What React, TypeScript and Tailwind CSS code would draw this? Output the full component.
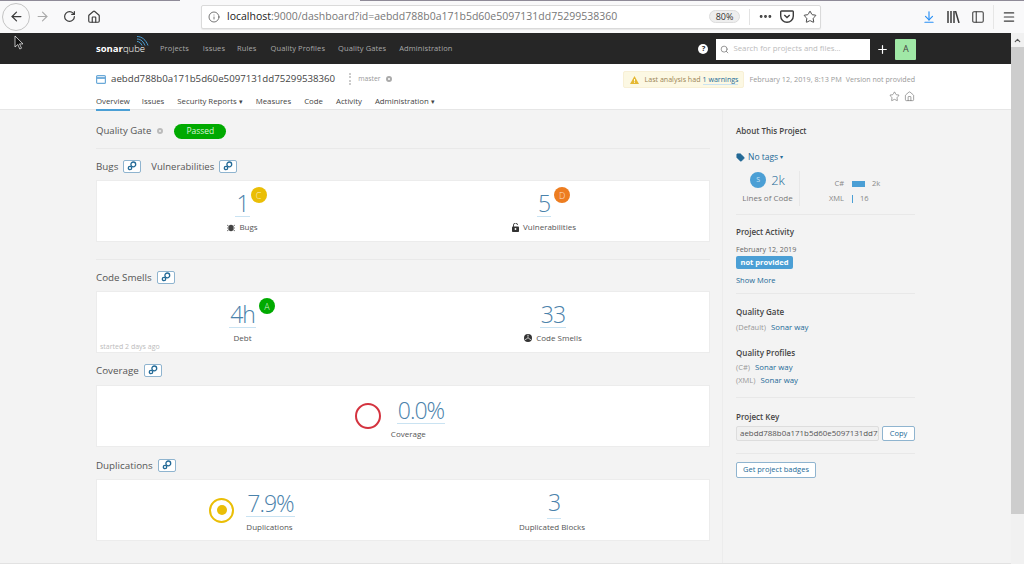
import React from "react";
import { Star, Home, Search, Plus, Tag, ChevronUp, MoreHorizontal, RotateCw, ArrowLeft, ArrowRight, Info, Menu, ArrowDownToLine, PanelLeft } from "lucide-react";

const sans = "font-['Open_Sans',sans-serif]";

function LinkBtn() {
  return (
    <span className="ml-[5px] inline-flex h-[13px] w-[18px] items-center justify-center rounded-[2px] border border-[#8fb4cf] bg-white">
      <svg width="10" height="10" viewBox="0 0 10 10" fill="none" stroke="#236a97" strokeWidth="1.3">
        <circle cx="6.3" cy="3.4" r="2.4" />
        <circle cx="3" cy="7" r="1.7" />
      </svg>
    </span>
  );
}

function Rating({ letter, color, className }: { letter: string; color: string; className: string }) {
  return (
    <span
      className={`absolute top-[-3px] flex h-[16px] w-[16px] items-center justify-center rounded-full text-[9px] leading-none tracking-normal text-[#ffffffcc] ${className}`}
      style={{ backgroundColor: color }}
    >
      {letter}
    </span>
  );
}

function Num({ children, badge }: { children: React.ReactNode; badge?: React.ReactNode }) {
  return (
    <span className="relative border-b border-[#cae3f2] px-[1px] text-[23px] leading-[26px] font-light tracking-[-1px] text-[#4a82ab]">
      {children}
      {badge}
    </span>
  );
}

function Label({ children }: { children: React.ReactNode }) {
  return <div className="mt-[4px] flex items-center gap-[4px] text-[8px] leading-[12px] text-[#555]">{children}</div>;
}

function Section({ title, extra, className }: { title: string; extra?: React.ReactNode; className: string }) {
  return (
    <div className={`flex items-center text-[9.8px] text-[#555] ${className}`}>
      <span className="pt-[2px] leading-[12px]">{title}</span>
      <LinkBtn />
      {extra}
    </div>
  );
}

function Card({ children, className }: { children: React.ReactNode; className: string }) {
  return <div className={`border border-[#ececec] bg-white ${className}`}>{children}</div>;
}

function Head({ children, className = "" }: { children: React.ReactNode; className?: string }) {
  return <div className={`text-[8px] leading-[12px] font-semibold text-[#444] ${className}`}>{children}</div>;
}

function SideLink({ children }: { children: React.ReactNode }) {
  return <span className="text-[7.8px] text-[#236a97]">{children}</span>;
}

function Browser() {
  return (
    <div className="relative flex h-[33px] items-center bg-[#f9f9fa] text-[#3c3c3c]">
      <div className="absolute top-0 left-0 h-[1px] w-[180px] bg-[#8f8b98]" />
      <div className="absolute top-0 left-[360px] h-[1px] w-[664px] bg-[#8f8b98]" />
      <span className="ml-[2px] flex h-[28px] w-[28px] items-center justify-center rounded-full border border-[#c4c4c4] bg-[#f9f9fa]">
        <ArrowLeft size={15} strokeWidth={2} />
      </span>
      <ArrowRight size={15} strokeWidth={1.8} className="ml-[5px] text-[#aaa]" />
      <RotateCw size={13} strokeWidth={2.2} className="ml-[13px]" />
      <Home size={14} strokeWidth={2} className="ml-[11px]" />
      <div className="ml-[100px] flex h-[24px] w-[620px] items-center rounded-[2px] border border-[#dadada] bg-white pr-[3px] pl-[6px] shadow-[0_1px_1px_#e8e8e8]">
        <Info size={12} strokeWidth={1.4} />
        <span className="ml-[7px] flex-1 overflow-hidden text-[10.5px] whitespace-nowrap text-[#777]">
          <span className="text-[#222]">localhost</span>:9000/dashboard?id=aebdd788b0a171b5d60e5097131dd75299538360
        </span>
        <span className="flex h-[13px] w-[31px] items-center justify-center rounded-full border border-[#ddd] bg-[#eee] text-[9px] text-[#333]">80%</span>
        <span className="ml-[9px] h-[16px] w-[1px] bg-[#e3e3e3]" />
        <MoreHorizontal size={15} strokeWidth={2.6} className="ml-[8px]" />
        <svg width="14" height="13" viewBox="0 0 14 13" fill="none" stroke="#3c3c3c" strokeWidth="1.4" className="ml-[7px]">
          <path d="M1.5 1h11a.8.8 0 0 1 .8.8V6a6.3 6.3 0 0 1-12.6 0V1.8A.8.8 0 0 1 1.5 1z" />
          <path d="M4.3 5l2.7 2.6L9.700 5" />
        </svg>
        <Star size={14} strokeWidth={1.6} className="ml-[9px]" />
      </div>
      <ArrowDownToLine size={14} strokeWidth={2} className="ml-[101px] text-[#2a90f5]" />
      <svg width="13" height="12" viewBox="0 0 13 12" fill="none" stroke="#3c3c3c" strokeWidth="1.5" className="ml-[11px]">
        <path d="M1 0v12M4 0v12M7 0v12M8.500 0l3.500 12" />
      </svg>
      <PanelLeft size={14} strokeWidth={1.8} className="ml-[11px]" />
      <span className="ml-[8px] h-[24px] w-[1px] bg-[#e6e6e6]" />
      <Menu size={14} strokeWidth={2} className="ml-[8px]" />
    </div>
  );
}

function TopNav() {
  const items = [
    ["Projects", "ml-[12px]"],
    ["Issues", "ml-[14px]"],
    ["Rules", "ml-[12px]"],
    ["Quality Profiles", "ml-[14px]"],
    ["Quality Gates", "ml-[13px]"],
    ["Administration", "ml-[13px]"],
  ];
  return (
    <div className="flex h-[31px] items-center bg-[#262626] pt-[1px] pl-[96px] text-[7.5px] tracking-[0.1px] text-[#a9a9a9]">
      <span className="relative flex w-[52px] items-center text-[9.5px] tracking-normal text-[#fff]">
        <b className="font-bold">sonar</b>
        <span className="font-light">qube</span>
        <svg width="13" height="11" viewBox="0 0 13 11" fill="none" stroke="#4b9fd5" strokeWidth="1" className="absolute top-[-7px] right-[-1px]">
          <path d="M1 1.500c5 0 9 3.500 11 9M1 4c4 0 6.500 3 8 6.500M1 6.500c2.500 0 4 1.800 5 4" />
        </svg>
      </span>
      {items.map(([t, c]) => (
        <span key={t} className={c}>{t}</span>
      ))}
      <span className="ml-[246px] flex h-[10px] w-[10px] items-center justify-center rounded-full bg-white text-[7.5px] font-bold tracking-normal text-[#262626]">?</span>
      <div className="ml-[8px] flex h-[21px] w-[154px] items-center bg-white pl-[4px] text-[7.8px] tracking-normal text-[#bbb]">
        <Search size={9} strokeWidth={2} className="text-[#777]" />
        <span className="ml-[4px]">Search for projects and files...</span>
      </div>
      <Plus size={13} strokeWidth={2.2} className="ml-[6px] text-white" />
      <span className="ml-[6px] flex h-[21px] w-[21px] items-center justify-center rounded-[1px] bg-[#a0e8a6] text-[9px] tracking-normal text-[#444]">A</span>
    </div>
  );
}

function ProjectBar() {
  const tabs = [
    ["Overview", "border-b-2 border-[#4b9fd5] pb-[2px]", ""],
    ["Issues", "ml-[12px]", ""],
    ["Security Reports", "ml-[13px]", "▾"],
    ["Measures", "ml-[13px]", ""],
    ["Code", "ml-[13px]", ""],
    ["Activity", "ml-[13px]", ""],
    ["Administration", "ml-[13px]", "▾"],
  ];
  return (
    <div className="flex h-[46px] border-b border-[#e6e6e6] bg-white pr-[96px] pl-[96px]">
      <div className="flex-1">
        <div className="flex h-[30px] items-center">
          <svg width="10" height="9" viewBox="0 0 10 9" fill="none" stroke="#6aa9d8" strokeWidth="1.2">
            <rect x="0.6" y="0.6" width="8.800" height="7.800" rx="1" />
            <path d="M0.600 3h8.800" strokeWidth="1.800" />
          </svg>
          <span className="ml-[5px] text-[9.7px] text-[#444]">aebdd788b0a171b5d60e5097131dd75299538360</span>
          <span className="ml-[14px] h-[12px] border-l-2 border-dotted border-[#ccc]" />
          <span className="ml-[7px] text-[6.8px] text-[#999]">master</span>
          <span className="ml-[6px] flex h-[6px] w-[6px] rounded-full border-2 border-[#aaa]" />
        </div>
        <div className="flex h-[16px] items-start pt-[1px] text-[7.8px] leading-[12px] whitespace-nowrap text-[#444]">
          {tabs.map(([t, c, a]) => (
            <span key={t} className={c}>
              {t}
              {a && <span className="ml-[2px] text-[7px]">{a}</span>}
            </span>
          ))}
        </div>
      </div>
      <div className="flex flex-col items-end">
        <div className="mt-[7px] flex items-center text-[7.3px] whitespace-nowrap text-[#999]">
          <span className="mr-[5px] flex h-[17px] w-[121px] items-center rounded-[2px] border border-[#f8f0d6] bg-[#fcf8e3] pl-[6px] text-[#9b8455]">
            <svg width="9" height="8" viewBox="0 0 9 8" className="mr-[5px]">
              <path d="M4.500 0L9 8H0z" fill="#e5b832" />
              <path d="M4.500 3v2.500M4.500 6.200v.8" stroke="#fff" strokeWidth="0.9" />
            </svg>
            <span className="text-[7.1px]">Last analysis had</span>
            <span className="ml-[2px] border-b border-[#cae3f2] text-[7.1px] text-[#236a97]">1 warnings</span>
          </span>
          <span>February 12, 2019, 8:13 PM</span>
          <span className="ml-[4px] text-[7.1px]">Version not provided</span>
        </div>
        <div className="mt-[3px] flex items-center gap-[4px] text-[#666]">
          <Star size={11} strokeWidth={1.3} />
          <Home size={11} strokeWidth={1.3} />
        </div>
      </div>
    </div>
  );
}

function Sidebar() {
  const hr = "border-t border-[#e8e8e8]";
  return (
    <aside className="ml-[12px] w-[193px] border-l border-[#ececec] pt-[15px] pl-[13px]">
      <Head>About This Project</Head>
      <div className="mt-[14px] flex items-center text-[8.5px] leading-[12px] text-[#236a97]">
        <Tag size={9} fill="#236a97" strokeWidth={1.5} />
        <span className="ml-[3px]">No tags</span>
        <span className="ml-[2px] text-[6px]">▾</span>
      </div>
      <div className="mt-[8px] flex h-[33px] items-start">
        <div className="flex w-[64px] flex-col items-center border-r border-[#e8e8e8] pb-[2px]">
          <div className="flex items-center">
            <span className="flex h-[16px] w-[16px] items-center justify-center rounded-full bg-[#4b9fd5] text-[7px] text-[#cfe6f5]">S</span>
            <span className="ml-[5px] text-[13px] leading-[18px] font-light text-[#236a97]">2k</span>
          </div>
          <span className="mt-[3px] text-[8px] leading-[12px] text-[#777]">Lines of Code</span>
        </div>
        <div className="ml-[28px] grid grid-cols-[16px_20px_12px] items-center gap-y-[4px] pt-[7px] text-[7.5px] leading-[11px] text-[#888]">
          <span className="text-right">C#</span>
          <span className="ml-[8px] h-[6px] w-[13px] bg-[#4b9fd5]" />
          <span className="ml-[8px]">2k</span>
          <span className="text-right">XML</span>
          <span className="ml-[8px] h-[8px] w-[1px] bg-[#4b9fd5]" />
          <span className="-ml-[4px]">16</span>
        </div>
      </div>
      <div className={`mt-[10px] ${hr}`} />
      <Head className="mt-[11px]">Project Activity</Head>
      <div className="mt-[5px] text-[7.2px] leading-[12px] text-[#666]">February 12, 2019</div>
      <div className="mt-[1px] flex h-[13px] w-[57px] items-center justify-center rounded-[2px] bg-[#4b9fd5] text-[7.5px] font-bold text-white">not provided</div>
      <div className="mt-[6px] text-[7.5px] leading-[11px] text-[#236a97]">Show More</div>
      <div className={`mt-[7px] ${hr}`} />
      <Head className="mt-[12px]">Quality Gate</Head>
      <div className="mt-[3px] flex items-center gap-[5px] text-[7.5px] leading-[12px] text-[#999]">(Default) <SideLink>Sonar way</SideLink></div>
      <Head className="mt-[14px]">Quality Profiles</Head>
      <div className="mt-[2px] flex items-center gap-[5px] text-[7.5px] leading-[13px] text-[#999]">(C#) <SideLink>Sonar way</SideLink></div>
      <div className="flex items-center gap-[5px] text-[7.5px] leading-[13px] text-[#999]">(XML) <SideLink>Sonar way</SideLink></div>
      <div className={`mt-[10px] ${hr}`} />
      <Head className="mt-[13px]">Project Key</Head>
      <div className="mt-[3px] flex items-center">
        <div className="h-[15px] w-[143px] overflow-hidden rounded-[2px] border border-[#ddd] bg-[#f0f0f0] px-[3px] text-[7.9px] leading-[13px] whitespace-nowrap text-[#555]">aebdd788b0a171b5d60e5097131dd75299538360</div>
        <span className="ml-[3px] flex h-[15px] w-[33px] items-center justify-center rounded-[2px] border border-[#8fb4cf] bg-white text-[7.5px] text-[#236a97]">Copy</span>
      </div>
      <div className={`mt-[12px] ${hr}`} />
      <span className="mt-[8px] flex h-[16px] w-[80px] items-center justify-center rounded-[2px] border border-[#8fb4cf] bg-white text-[7.500px] text-[#236a97]">Get project badges</span>
    </aside>
  );
}

function Main() {
  return (
    <main className="w-[614px]">
      <div className="flex h-[39px] items-center border-b border-[#e9e9e9] pt-[4px] text-[9.6px] text-[#555]">
        Quality Gate
        <span className="ml-[6px] flex h-[6px] w-[6px] rounded-full border-2 border-[#bbb]" />
        <span className="ml-[11px] flex h-[15px] w-[52px] items-center justify-center rounded-full bg-[#00aa00] text-[8.5px] text-[#d8f3d8]">Passed</span>
      </div>
      <Section title="Bugs" className="mt-[10px]" extra={<><span className="ml-[10px] pt-[2px] text-[9.5px] leading-[12px]">Vulnerabilities</span><LinkBtn /></>} />
      <Card className="mt-[7px] grid h-[62px] grid-cols-2 pt-[9px]">
        <div className="flex justify-center">
          <div className="mr-[15px] flex flex-col items-center">
            <Num badge={<Rating letter="C" color="#eabe06" className="left-[calc(100%+1px)]" />}>1</Num>
            <Label>
              <svg width="8" height="9" viewBox="0 0 8 9" fill="#444"><ellipse cx="4" cy="5" rx="2.500" ry="3.300" /><path d="M0 2l2 1.500M8 2L6 3.500M0 5h2M8 5H6M0 8l2-1.500M8 8L6 6.500" stroke="#444" strokeWidth="0.7" /></svg>
              Bugs
            </Label>
          </div>
        </div>
        <div className="flex justify-center">
          <div className="mr-[24px] flex flex-col items-center">
            <Num badge={<Rating letter="D" color="#ed7d20" className="left-[calc(100%+3px)]" />}>5</Num>
            <Label>
              <svg width="7" height="9" viewBox="0 0 7 9" fill="#333"><rect x="0" y="3.500" width="7" height="5.500" rx="0.800" /><path d="M1.500 4V2a2 2 0 0 1 4 0" fill="none" stroke="#333" strokeWidth="0.900" /><circle cx="3.500" cy="6" r="0.900" fill="#fff" /></svg>
              Vulnerabilities
            </Label>
          </div>
        </div>
      </Card>
      <div className="mt-[17px] border-t border-[#e9e9e9]" />
      <Section title="Code Smells" className="mt-[10px]" />
      <Card className="relative mt-[7px] grid h-[62px] grid-cols-2 pt-[9px]">
        <div className="flex justify-center">
          <div className="mr-[15px] flex flex-col items-center">
            <Num badge={<Rating letter="A" color="#00aa00" className="left-[calc(100%+3px)]" />}>4h</Num>
            <Label>Debt</Label>
          </div>
        </div>
        <div className="flex justify-center">
          <div className="mr-[6px] flex flex-col items-center">
            <Num>33</Num>
            <Label>
              <svg width="8" height="8" viewBox="0 0 8 8"><circle cx="4" cy="4" r="4" fill="#333" /><circle cx="4" cy="4" r="0.800" fill="#fff" /><path d="M4 2.600V0.800M2.800 4.700L1.200 5.600M5.200 4.700l1.600.9" stroke="#fff" strokeWidth="0.900" /></svg>
              Code Smells
            </Label>
          </div>
        </div>
        <span className="absolute bottom-0 left-[3px] text-[7px] leading-[10px] text-[#bbb]">started 2 days ago</span>
      </Card>
      <Section title="Coverage" className="mt-[10px]" />
      <Card className="mt-[8px] flex h-[62px] items-center justify-center pr-[6px]">
        <span className="h-[26px] w-[26px] rounded-full border-2 border-[#d4333f]" />
        <div className="ml-[16px] flex flex-col items-start pt-[4px]">
          <Num>0.0%</Num>
          <div className="-ml-[6px]"><Label>Coverage</Label></div>
        </div>
      </Card>
      <Section title="Duplications" className="mt-[11px]" />
      <Card className="mt-[7px] grid h-[62px] grid-cols-2">
        <div className="flex items-center justify-center pl-[4px]">
          <span className="flex h-[25px] w-[25px] items-center justify-center rounded-full border-2 border-[#eabe06]">
            <span className="h-[10px] w-[10px] rounded-full bg-[#eabe06]" />
          </span>
          <div className="ml-[12px] flex flex-col items-start pt-[2px]">
            <Num>7.9%</Num>
            <Label>Duplications</Label>
          </div>
        </div>
        <div className="flex justify-center pt-[9px]">
          <div className="mr-[8px] flex flex-col items-center">
            <span className="ml-[4px]"><Num>3</Num></span>
            <Label>Duplicated Blocks</Label>
          </div>
        </div>
      </Card>
    </main>
  );
}

export default function App() {
  return (
    <div className={`h-[564px] w-[1024px] overflow-hidden bg-[#f3f3f3] ${sans}`}>
      <Browser />
      <div className="relative flex h-[531px]">
        <div className="w-[1011px]">
          <TopNav />
          <ProjectBar />
          <div className="flex h-[454px] border-b border-[#e2e2e2] pl-[96px]">
            <Main />
            <Sidebar />
          </div>
        </div>
        <div className="flex w-[13px] flex-col bg-[#f1f1f1]">
          <div className="flex h-[14px] items-center justify-center"><ChevronUp size={9} strokeWidth={3} className="text-[#555]" /></div>
          <div className="h-[467px] bg-[#cdcdcd]" />
        </div>
        <svg width="10" height="15" viewBox="0 0 10 15" className="absolute top-[2px] left-[14px]">
          <path d="M1 1v11l2.800-2.500 2 4.500 1.700-.8-2-4.300H9z" fill="#111" stroke="#fff" strokeWidth="0.700" />
        </svg>
      </div>
    </div>
  );
}
